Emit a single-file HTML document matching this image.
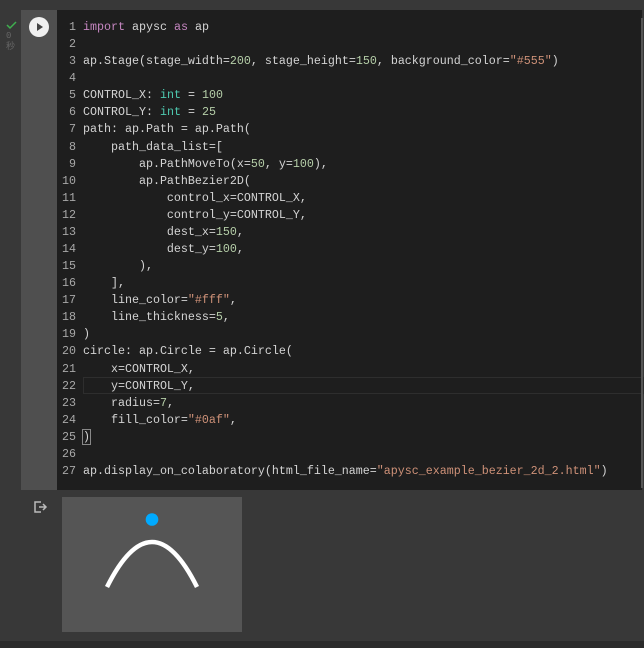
<!DOCTYPE html>
<html><head><style>
body{margin:0;width:644px;height:648px;background:#2b2b2b;position:relative;overflow:hidden;font-family:"Liberation Mono","Noto Sans CJK JP",monospace}
.l{position:absolute;left:0;top:0;width:644px;height:641px;background:#383838}
.g{position:absolute;left:21px;top:10px;width:36px;height:480px;background:#4f4f4f}
.c{position:absolute;left:57px;top:10px;width:585px;height:480px;background:#1e1e1e}
.code{position:absolute;left:62px;top:19px;font-size:11.67px;line-height:17.08px;color:#d4d4d4;white-space:pre}
.n{color:#a8a8a8;display:inline-block;width:14px;text-align:right}
.k{color:#c586c0}.t{color:#4ec9b0}.d{color:#b5cea8}.s{color:#ce9178}
.cur{position:absolute;left:83px;top:377px;width:559px;height:15px;border:1px solid #2e2e2e}
</style></head><body>
<div class="l"></div>
<div class="g"></div>
<div class="c"></div>
<div class="cur"></div>
<div style="position:absolute;left:641px;top:18px;width:2px;height:470px;background:#555"></div>
<div style="position:absolute;left:29px;top:17px;width:20px;height:20px;border-radius:50%;background:#f0f0f0"></div>
<svg style="position:absolute;left:29px;top:17px" width="20" height="20"><path d="M8 6 L14 10 L8 14Z" fill="#444"/></svg>
<svg style="position:absolute;left:6px;top:20px" width="12" height="10"><path d="M1 5 L4 8 L10 2" stroke="#3fb04f" stroke-width="1.5" fill="none"/></svg>
<div style="position:absolute;left:6px;top:31px;font-size:9px;color:#666;line-height:11px">0<br>秒</div>
<div class="code"><span class="n">1</span> <span class="k">import</span> apysc <span class="k">as</span> ap
<span class="n">2</span>
<span class="n">3</span> ap.Stage(stage_width=<span class="d">200</span>, stage_height=<span class="d">150</span>, background_color=<span class="s">"#555"</span>)
<span class="n">4</span>
<span class="n">5</span> CONTROL_X: <span class="t">int</span> = <span class="d">100</span>
<span class="n">6</span> CONTROL_Y: <span class="t">int</span> = <span class="d">25</span>
<span class="n">7</span> path: ap.Path = ap.Path(
<span class="n">8</span>     path_data_list=[
<span class="n">9</span>         ap.PathMoveTo(x=<span class="d">50</span>, y=<span class="d">100</span>),
<span class="n">10</span>         ap.PathBezier2D(
<span class="n">11</span>             control_x=CONTROL_X,
<span class="n">12</span>             control_y=CONTROL_Y,
<span class="n">13</span>             dest_x=<span class="d">150</span>,
<span class="n">14</span>             dest_y=<span class="d">100</span>,
<span class="n">15</span>         ),
<span class="n">16</span>     ],
<span class="n">17</span>     line_color=<span class="s">"#fff"</span>,
<span class="n">18</span>     line_thickness=<span class="d">5</span>,
<span class="n">19</span> )
<span class="n">20</span> circle: ap.Circle = ap.Circle(
<span class="n">21</span>     x=CONTROL_X,
<span class="n">22</span>     y=CONTROL_Y,
<span class="n">23</span>     radius=<span class="d">7</span>,
<span class="n">24</span>     fill_color=<span class="s">"#0af"</span>,
<span class="n">25</span> <span style="outline:1px solid #888">)</span>
<span class="n">26</span>
<span class="n">27</span> ap.display_on_colaboratory(html_file_name=<span class="s">"apysc_example_bezier_2d_2.html"</span>)</div>
<svg style="position:absolute;left:33px;top:499px" width="16" height="16"><path d="M8 3 H2 V13 H8" stroke="#bbb" stroke-width="1.5" fill="none"/><path d="M6 8 H13 M10 5 L13 8 L10 11" stroke="#bbb" stroke-width="1.5" fill="none"/></svg>
<svg style="position:absolute;left:62px;top:497px" width="180" height="135"><rect width="180" height="135" fill="#555"/><path d="M45 90 Q90 0 135 90" stroke="#fff" stroke-width="4.5" fill="none"/><circle cx="90" cy="22.5" r="6.3" fill="#0af"/></svg>
</body></html>
